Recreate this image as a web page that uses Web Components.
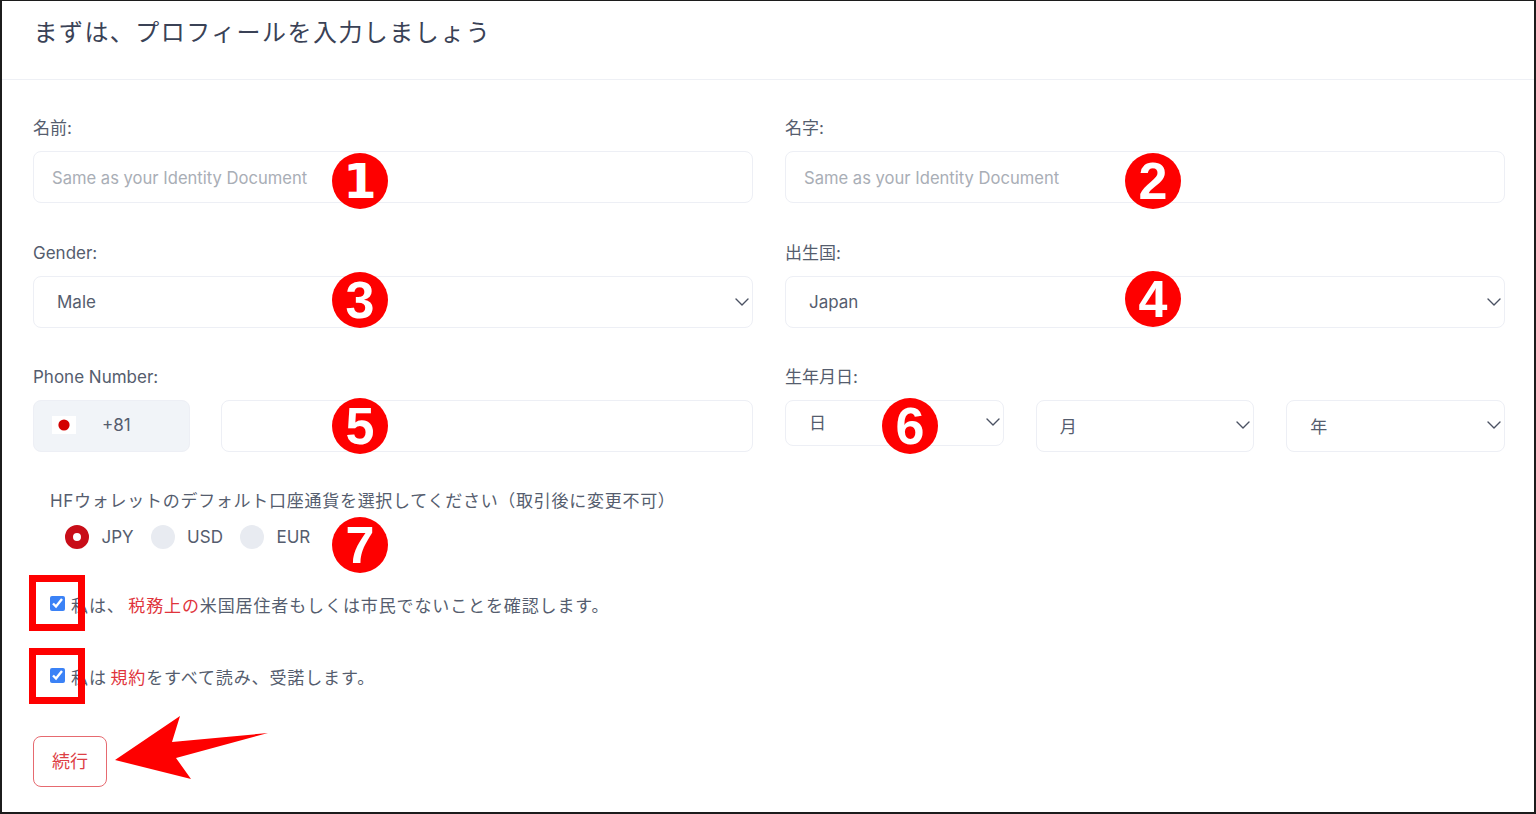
<!DOCTYPE html>
<html lang="ja">
<head>
<meta charset="utf-8">
<title>Profile</title>
<style>
  html, body { margin: 0; padding: 0; background: #fff; }
  body { font-family: Inter, "Noto Sans CJK JP", sans-serif; color: #4b5563; }
</style>
</head>
<body>
<profile-page heading="まずは、プロフィールを入力しましょう">
  <form-field label="名前:"><text-box placeholder="Same as your Identity Document"></text-box></form-field>
  <form-field label="名字:"><text-box placeholder="Same as your Identity Document"></text-box></form-field>
  <form-field label="Gender:"><select-box>Male</select-box></form-field>
  <form-field label="出生国:"><select-box>Japan</select-box></form-field>
  <form-field label="Phone Number:"><phone-input code="+81"></phone-input></form-field>
  <form-field label="生年月日:">
    <date-input>
      <select-box short>日</select-box>
      <select-box kanji>月</select-box>
      <select-box kanji>年</select-box>
    </date-input>
  </form-field>

  <currency-group slot="after" label="HFウォレットのデフォルト口座通貨を選択してください（取引後に変更不可）">
    <currency-radio checked>JPY</currency-radio>
    <currency-radio>USD</currency-radio>
    <currency-radio>EUR</currency-radio>
  </currency-group>
  <agree-row slot="after">私は、 <a>税務上の</a>米国居住者もしくは市民でないことを確認します。</agree-row>
  <agree-row slot="after" second>私は <a>規約</a>をすべて読み、受諾します。</agree-row>
  <submit-button slot="after">続行</submit-button>

  <note-badge slot="notes" style="left:332px;top:153px;font-family:'DejaVu Sans',sans-serif;font-size:48px">1</note-badge>
  <note-badge slot="notes" style="left:1125px;top:153px">2</note-badge>
  <note-badge slot="notes" style="left:332px;top:272px">3</note-badge>
  <note-badge slot="notes" style="left:1125px;top:271px">4</note-badge>
  <note-badge slot="notes" style="left:332px;top:398px">5</note-badge>
  <note-badge slot="notes" style="left:882px;top:398px">6</note-badge>
  <note-badge slot="notes" style="left:332px;top:517px">7</note-badge>
  <note-box slot="notes" style="left:29px;top:575px"></note-box>
  <note-box slot="notes" style="left:29px;top:648px"></note-box>
  <note-arrow slot="notes" style="left:115px;top:716px"></note-arrow>
</profile-page>

<script>
const cjk = 'Inter, "Noto Sans CJK JP", sans-serif';

function define(name, css, html) {
  customElements.define(name, class extends HTMLElement {
    connectedCallback() {
      if (this.shadowRoot) return;
      this.attachShadow({ mode: 'open' });
      this.shadowRoot.innerHTML = `<style>${css}</style>${typeof html === 'function' ? html(this) : html}`;
    }
  });
}

define('profile-page', `
  :host { display: block; position: relative; box-sizing: border-box; width: 1536px; height: 814px;
    border: solid #1c1c1c; border-width: 1px 2px 2px 2px; overflow: hidden; background: #fff; font-family: ${cjk}; }
  header { box-sizing: border-box; height: 79px; border-bottom: 1px solid #eef0f5; padding: 17px 0 0 31.5px;
    font-size: 24px; line-height: 30px; letter-spacing: 1.45px; color: #3a4256; }
  .grid { display: grid; grid-template-columns: 720px 720px; column-gap: 32px; row-gap: 37.5px; padding: 36px 0 0 31px; }
  .after { padding-left: 31px; }
`, el => `
  <header>${el.getAttribute('heading')}</header>
  <div class="grid"><slot></slot></div>
  <div class="after"><slot name="after"></slot></div>
  <slot name="notes"></slot>
`);

define('form-field', `
  :host { display: block; }
  label { display: block; height: 24px; line-height: 25px; margin-bottom: 11px; font-size: 17px; color: #555d6e; }
`, el => `<label>${el.getAttribute('label')}</label><slot></slot>`);

define('text-box', `
  :host { display: block; flex: 1; box-sizing: border-box; height: 52px; border: 1px solid #edeff5; border-radius: 8px;
    background: #fff; padding-left: 18px; line-height: 53px; font-size: 16.6px; color: #a9aeb6; }
`, el => `${el.getAttribute('placeholder') || ''}`);

define('select-box', `
  :host { display: flex; align-items: center; justify-content: space-between; box-sizing: border-box; flex: 1; height: 52px;
    border: 1px solid #edeff5; border-radius: 8px; background: #fff; padding: 0 2px 0 23px; font-size: 17px; color: #555d6e; }
  :host([short]) { height: 46px; padding-bottom: 3px; }
  :host([kanji]) { padding-bottom: 2px; }
  svg { display: block; width: 16px; height: 10px; }
`, `<slot></slot><svg viewBox="0 0 16 10" fill="none" stroke="#4b5263" stroke-width="1.4" stroke-linecap="round" stroke-linejoin="round"><path d="M2 2l6 6 6-6"/></svg>`);

define('date-input', `
  :host { display: flex; align-items: flex-start; gap: 32px; }
`, `<slot></slot>`);

define('phone-input', `
  :host { display: flex; gap: 31px; }
  .code { display: flex; align-items: center; box-sizing: border-box; width: 157px; height: 52px; border: 1px solid #edeff5; border-radius: 8px;
    background: #f1f4f8; padding: 0 0 3px 18px; font-size: 17px; color: #555d6e; }
  svg { display: block; width: 24px; height: 18px; margin: 3px 26px 0 0; position: relative; top: -1px; }
`, el => `
  <div class="code"><svg viewBox="0 0 24 18"><rect width="24" height="18" fill="#fff"/><circle cx="12" cy="9" r="5.6" fill="#d30000"/></svg>${el.getAttribute('code')}</div>
  <text-box></text-box>
`);

define('currency-group', `
  :host { display: block; padding: 36px 0 0 17px; }
  p { margin: 0 0 13px; height: 24px; line-height: 26px; font-size: 17px; letter-spacing: .72px; color: #555d6e; white-space: nowrap; }
  .opts { display: flex; padding-left: 15px; height: 24px; }
`, el => `<p>${el.getAttribute('label')}</p><div class="opts"><slot></slot></div>`);

define('currency-radio', `
  :host { display: flex; align-items: center; gap: 12.5px; margin-right: 17px; font-size: 17px; color: #555d6e; }
  i { display: block; box-sizing: border-box; width: 24px; height: 24px; border-radius: 50%; background: #e8ebf1; }
  :host([checked]) i { background: #fff; border: 8px solid #c80d18; }
`, `<i></i><slot></slot>`);

define('agree-row', `
  :host { display: flex; align-items: center; height: 24px; margin-top: 44px; padding-left: 17px; font-size: 17px; letter-spacing: .88px; word-spacing: -2px; color: #555d6e; white-space: pre; }
  :host([second]) { margin-top: 48px; }
  input { width: 15px; height: 15px; margin: 0 6px 4px 0; accent-color: #3b82f6; }
  span { position: relative; top: -1px; }
  ::slotted(a) { color: #e0343c; }
`, `<input type="checkbox" checked><span><slot></slot></span>`);

define('submit-button', `
  :host { display: block; margin-top: 47px; width: 74px; }
  button { display: block; box-sizing: border-box; width: 74px; height: 51px; padding: 0 0 3px; background: #fff; border: 1px solid #e66a70; border-radius: 8px;
    font: 18px ${cjk}; color: #dd3f46; }
`, `<button type="button"><slot></slot></button>`);

define('note-badge', `
  :host { position: absolute; display: flex; align-items: center; justify-content: center; width: 56px; height: 56px; margin: -1px 0 0 -2px;
    border-radius: 50%; background: #fe0000; color: #fff; font: bold 52px/56px "Liberation Sans", sans-serif; }
`, `<slot></slot>`);

define('note-box', `
  :host { position: absolute; display: block; box-sizing: border-box; width: 56px; height: 56px; margin: -1px 0 0 -2px; border: 7px solid #fe0000; }
`, ``);

define('note-arrow', `
  :host { position: absolute; display: block; width: 154px; height: 63px; margin: -1px 0 0 -2px; }
  svg { display: block; }
`, `<svg width="154" height="63" viewBox="0 0 154 63"><polygon fill="#fe0000" points="0,44 65,0 57,26 153,17 61,42 76,63"/></svg>`);
</script>
</body>
</html>
